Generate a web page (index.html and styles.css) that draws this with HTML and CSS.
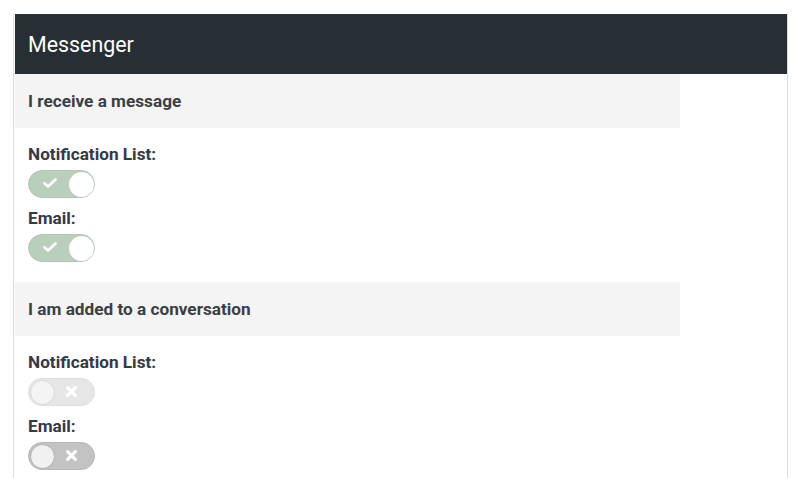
FILE: index.html
```html
<!DOCTYPE html>
<html lang="en">
<head>
<meta charset="utf-8">
<title>Messenger</title>
<link rel="stylesheet" href="styles.css">
</head>
<body>
<div class="card">
  <div class="card-header">Messenger</div>
  <div class="group">
    <div class="group-title">I receive a message</div>
    <div class="group-body">
      <div class="field">
        <div class="label">Notification List:</div>
        <span class="toggle on"><svg class="ico check" viewBox="0 0 14 10"><path d="M1.5 5.2 L5 8.5 L12.5 1.5" /></svg><span class="knob"></span></span>
      </div>
      <div class="field">
        <div class="label">Email:</div>
        <span class="toggle on"><svg class="ico check" viewBox="0 0 14 10"><path d="M1.5 5.2 L5 8.5 L12.5 1.5" /></svg><span class="knob"></span></span>
      </div>
    </div>
  </div>
  <div class="group">
    <div class="group-title">I am added to a conversation</div>
    <div class="group-body">
      <div class="field">
        <div class="label">Notification List:</div>
        <span class="toggle off"><span class="knob"></span><svg class="ico times" viewBox="0 0 10 10"><path d="M1.5 1.5 L8.5 8.5 M8.5 1.5 L1.5 8.5" /></svg></span>
      </div>
      <div class="field">
        <div class="label">Email:</div>
        <span class="toggle off dark"><span class="knob"></span><svg class="ico times" viewBox="0 0 10 10"><path d="M1.5 1.5 L8.5 8.5 M8.5 1.5 L1.5 8.5" /></svg></span>
      </div>
    </div>
  </div>
</div>
</body>
</html>
```
FILE: styles.css
```css
html, body {
  margin: 0;
  padding: 0;
  background: #ffffff;
}
body {
  font-family: Roboto, "Liberation Sans", Arial, sans-serif;
  color: #343a40;
  padding: 14px 11px 0 13px;
}
.card {
  border-left: 1px solid #dcdcdc;
  border-right: 1px solid #dcdcdc;
  padding: 0 0 0 1px;
  min-height: 470px;
}
.card-header {
  background: #272e34;
  color: #ffffff;
  height: 60px;
  display: flex;
  align-items: center;
  padding-left: 13px;
  font-size: 21.4px;
  font-weight: 400;
}
.group-title {
  width: 652px;
  height: 54px;
  background: #f4f4f4;
  padding-left: 13px;
  display: flex;
  align-items: center;
  font-size: 17.2px;
  font-weight: 700;
  color: #3b3f44;
}
.group-body {
  padding: 14px 0 12px 13px;
}
.field {
  margin-bottom: 8px;
}
.label {
  font-size: 17.2px;
  font-weight: 700;
  line-height: 24px;
  margin-bottom: 4px;
  color: #343a40;
}
.toggle {
  box-sizing: border-box;
  width: 67px;
  height: 28px;
  border-radius: 14px;
  display: flex;
  align-items: center;
  padding: 0 0.5px;
  justify-content: space-between;
}
.toggle.on {
  background: #bacebc;
  border: 1px solid #b3c8b5;
}
.toggle.off {
  background: #e6e6e6;
  border: 1px solid #dedede;
}
.toggle.off.dark {
  background: #c3c3c3;
  border: 1px solid #b8b8b8;
}
.knob {
  width: 25px;
  height: 25px;
  border-radius: 50%;
  background: #ffffff;
  box-sizing: border-box;
}
.toggle.off .knob {
  background: #f4f4f4;
  border: 1px solid #d8d8d8;
}
.toggle.off.dark .knob {
  background: #f1f1f1;
  border-color: #b0b0b0;
}
.ico {
  fill: none;
  stroke: #ffffff;
  stroke-linecap: round;
  stroke-linejoin: round;
}
.check {
  width: 14px;
  height: 10px;
  stroke-width: 2.7;
  margin-left: 13px;
  margin-top: -3px;
}
.times {
  width: 11px;
  height: 11px;
  stroke-width: 2.9;
  margin-right: 17px;
  margin-top: -2px;
}
```
